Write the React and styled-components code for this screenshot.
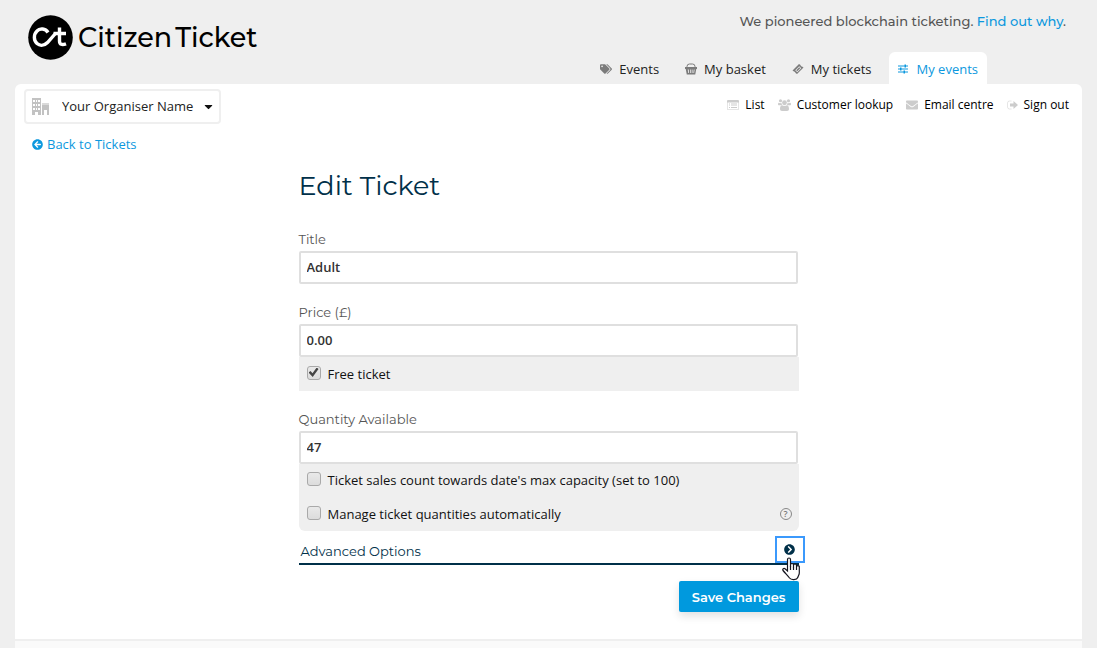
import React, { useState } from 'react';
import styled, { createGlobalStyle, css } from 'styled-components';
import {
  FaTags,
  FaEnvelope,
  FaArrowCircleLeft,
  FaChevronCircleRight,
  FaCaretDown
} from 'react-icons/fa';

/* Icons that the icon set does not have in this shape */
const BasketIcon = () => (
  <svg viewBox="0 0 24 24" width="12" height="12" fill="currentColor" aria-hidden="true">
    <path d="M4 9V7a5 5 0 0 1 5-5h6a5 5 0 0 1 5 5v2" fill="none" stroke="currentColor" strokeWidth="2" />
    <path
      fillRule="evenodd"
      d="M0 8h24v4h-1.500l-2 11h-17l-2-11H0zM5.500 13l1 7h1.500l-.5-7zM10 13v7h1.500v-7zM13.500 13v7H15v-7zM17.500 13l-.7 7h1.400l1-7z"
    />
  </svg>
);

const TicketIcon = () => (
  <svg viewBox="0 0 24 24" width="12" height="12" fill="currentColor" aria-hidden="true">
    <path
      fillRule="evenodd"
      d="M1 15 14 2l3 2a3 3 0 0 0 3 3l3 2-13 13-3-2a3 3 0 0 0-3-3zM6.500 14.500l4 4 8-8-4-4zM8.500 14.500l6-6 2 2-6 6z"
    />
  </svg>
);

const SlidersIcon = () => (
  <svg viewBox="0 0 20 20" width="10" height="10" aria-hidden="true">
    <path d="M0 4h20M0 10h20M0 16h20" stroke="currentColor" strokeWidth="2" />
    <path d="M13 1h3v6h-3zM4 7h3v6H4zM11 13h3v6h-3z" fill="currentColor" />
  </svg>
);

const ListIcon = () => (
  <svg viewBox="0 0 24 20" width="12" height="10" fill="currentColor" aria-hidden="true">
    <path
      fillRule="evenodd"
      d="M2 0h20a2 2 0 0 1 2 2v16a2 2 0 0 1-2 2H2a2 2 0 0 1-2-2V2a2 2 0 0 1 2-2zM1 5v14h22V5zM4 7h2v2H4zM8 7h12v2H8zM4 11h2v1H4zM8 11h12v1H8zM4 14h2v2H4zM8 14h12v2H8z"
    />
  </svg>
);

const UsersIcon = () => (
  <svg viewBox="0 0 26 24" width="13" height="12" fill="currentColor" aria-hidden="true">
    <circle cx="5" cy="3.500" r="3.200" />
    <circle cx="21" cy="3.500" r="3.200" />
    <circle cx="13" cy="7.500" r="4.800" />
    <path d="M1.500 7.500c2 1 4 1 5.500 0 0 2 .3 3.500 1.500 5H2c-1.500 0-2-1-2-2 0-1.500.5-3 1.500-3zM24.500 7.500c-2 1-4 1-5.500 0 0 2-.3 3.500-1.500 5H24c1.500 0 2-1 2-2 0-1.500-.5-3-1.500-3z" />
    <path d="M8 12.500c3 2 7 2 10 0 3 .5 4 4 4 7.500 0 2.500-1.500 4-4 4H8c-2.500 0-4-1.500-4-4 0-3.500 1-7 4-7.500z" />
  </svg>
);

const SignOutIcon = () => (
  <svg viewBox="0 0 22 20" width="11" height="10" fill="currentColor" aria-hidden="true">
    <path d="M9 2H5a4 4 0 0 0-4 4v8a4 4 0 0 0 4 4h4" fill="none" stroke="currentColor" strokeWidth="1" />
    <path d="M6 7h7V2l9 8-9 8v-5H6z" />
  </svg>
);

const BuildingIcon = () => (
  <svg viewBox="0 0 17 17" width="17" height="17" fill="currentColor" aria-hidden="true">
    <path
      fillRule="evenodd"
      d="M0 0h9v17H6v-3H3v3H0zM1 2v2h2V2zM4 2v2h1V2zM6 2v2h2V2zM1 6v2h2V6zM4 6v2h1V6zM6 6v2h2V6zM1 10v2h2v-2zM4 10v2h1v-2zM6 10v2h2v-2z"
    />
    <path opacity="0.6" d="M10 5h7v2h-7z" />
    <path d="M10 7h7v10h-2v-5h-3v5h-2z" />
  </svg>
);

const HandCursor = () => (
  <svg viewBox="0 0 18 24" width="18" height="24" aria-hidden="true">
    <path
      d="M5.500 14V2.500a1.500 1.500 0 0 1 3 0V10 8a1.500 1.500 0 0 1 3 0v2.500V8.500a1.500 1.500 0 0 1 3 0V11v-1.500a1.500 1.500 0 0 1 2.800 0V16c0 2-1.300 3-1.500 4.500-1 2.500-6.500 2.800-8.300.5C6 19 4 17 1 13.500c-.8-1.400.8-2.800 2-1.800z"
      fill="#fff"
      stroke="#15151f"
      strokeWidth="1.200"
    />
    <path d="M8.500 9v4M11.500 10v3M14.500 11v2" stroke="#15151f" strokeWidth="1.200" />
  </svg>
);

const LogoMark = () => (
  <svg viewBox="0 0 45 45" width="45" height="45" aria-hidden="true">
    <circle cx="22.500" cy="22.500" r="22.300" fill="#000" />
    <g fill="none" stroke="#fff" strokeWidth="3.400">
      <path d="M20 17.500C17.500 13.500 12 12.800 9 16c-3.600 3.500-3.400 9.500 0 12.500 3.200 2.800 7.500 2 10.500-1l7.500-8.500" />
      <path d="M31.500 12.500V26c0 3.500 2.500 4.300 6.500 2.800M25.500 18.500H38" />
    </g>
  </svg>
);

const navItems = [
  { label: 'Events', icon: <FaTags size={12} /> },
  { label: 'My basket', icon: <BasketIcon /> },
  { label: 'My tickets', icon: <TicketIcon /> },
  { label: 'My events', icon: <SlidersIcon />, active: true }
];

const subItems = [
  { label: 'List', icon: <ListIcon /> },
  { label: 'Customer lookup', icon: <UsersIcon /> },
  { label: 'Email centre', icon: <FaEnvelope size={12} /> },
  { label: 'Sign out', icon: <SignOutIcon /> }
];

const Header = () => (
  <TopBar>
    <Logo href="/">
      <LogoMark />
      <Wordmark>
        <span>Citizen</span> <span>Ticket</span>
      </Wordmark>
    </Logo>
    <TopRight>
      <Tagline>
        We pioneered blockchain ticketing. <a href="/blockchain">Find out why</a>.
      </Tagline>
      <Tabs>
        {navItems.map((item) => (
          <Tab href="#" key={item.label} $active={item.active}>
            <IconBox>{item.icon}</IconBox>
            {item.label}
          </Tab>
        ))}
      </Tabs>
    </TopRight>
  </TopBar>
);

const Toolbar = () => (
  <ToolbarRow>
    <Organiser>
      <BuildingIcon />
      <select aria-label="Organiser">
        <option>Your Organiser Name</option>
      </select>
      <FaCaretDown size={13} />
    </Organiser>
    <SubNav>
      {subItems.map((item) => (
        <SubLink href="#" key={item.label}>
          {item.icon}
          {item.label}
        </SubLink>
      ))}
    </SubNav>
  </ToolbarRow>
);

const TicketForm = () => {
  const [title, setTitle] = useState('Adult');
  const [price, setPrice] = useState('0.00');
  const [quantity, setQuantity] = useState('47');

  return (
    <Form onSubmit={(e) => e.preventDefault()}>
      <Heading>Edit Ticket</Heading>
      <Field>
        <Label htmlFor="title">Title</Label>
        <TextInput id="title" value={title} onChange={(e) => setTitle(e.target.value)} />
      </Field>
      <Field>
        <Label htmlFor="price">Price (£)</Label>
        <TextInput id="price" value={price} onChange={(e) => setPrice(e.target.value)} />
        <Options>
          <Option>
            <Checkbox type="checkbox" defaultChecked />
            Free ticket
          </Option>
        </Options>
      </Field>
      <Field>
        <Label htmlFor="quantity">Quantity Available</Label>
        <TextInput id="quantity" value={quantity} onChange={(e) => setQuantity(e.target.value)} />
        <Options $rounded>
          <Option>
            <Checkbox type="checkbox" />
            Ticket sales count towards date's max capacity (set to 100)
          </Option>
          <OptionRow>
            <Option>
              <Checkbox type="checkbox" />
              Manage ticket quantities automatically
            </Option>
            <Help type="button" aria-label="Help">?</Help>
          </OptionRow>
        </Options>
      </Field>
      <Advanced>
        Advanced Options
        <Toggle type="button" aria-label="Show advanced options">
          <FaChevronCircleRight size={11} />
          <Pointer>
            <HandCursor />
          </Pointer>
        </Toggle>
      </Advanced>
      <Save type="submit">Save Changes</Save>
    </Form>
  );
};

export default function App() {
  return (
    <>
      <GlobalStyle />
      <Header />
      <Panel>
        <Toolbar />
        <BackLink href="#">
          <FaArrowCircleLeft size={11} />
          Back to Tickets
        </BackLink>
        <TicketForm />
      </Panel>
      <Footer />
    </>
  );
}

const display = "Montserrat, Inter, 'Liberation Sans', sans-serif";
const body = "'Open Sans', 'Noto Sans', sans-serif";

const GlobalStyle = createGlobalStyle`
  * {
    box-sizing: border-box;
  }

  body {
    margin: 0;
    background: #efefef;
    color: #111;
    font: 13px/20px ${body};
  }

  #root {
    display: flex;
    flex-direction: column;
    min-height: 100vh;
  }

  a {
    color: #0c98de;
    text-decoration: none;
  }

  svg {
    display: block;
    flex: none;
  }
`;

const TopBar = styled.header`
  display: flex;
  justify-content: space-between;
  height: 84px;
  padding: 0 31px 0 28px;
`;

const Logo = styled.a`
  display: flex;
  align-items: center;
  align-self: flex-start;
  gap: 5px;
  margin-top: 15px;
  color: #000;
  font: 500 27px/45px ${display};
  white-space: nowrap;
`;

const Wordmark = styled.span`
  display: flex;
  gap: 3px;
`;

const TopRight = styled.div`
  display: flex;
  flex-direction: column;
  justify-content: space-between;
  align-items: flex-end;
  padding-top: 11px;
`;

const Tagline = styled.p`
  margin: 0;
  color: #555;
  font: 500 13px/20px ${display};
`;

const Tabs = styled.nav`
  display: flex;
  gap: 8px;
  margin-right: 79px;
`;

const Tab = styled.a`
  display: flex;
  align-items: center;
  height: 32px;
  padding: 2px 9px 0;
  border-radius: 6px 6px 0 0;
  color: #222;

  ${(props) => props.$active && css`
    background: #fff;
    color: #0c98de;
  `}

  & svg {
    color: ${(props) => (props.$active ? '#0c98de' : '#7b7b7b')};
  }
`;

const IconBox = styled.span`
  width: 19px;
`;

const Panel = styled.main`
  margin: 0 15px;
  padding: 5px 9px 27px;
  border-radius: 6px 6px 0 0;
  background: #fff;
`;

const ToolbarRow = styled.div`
  display: flex;
  justify-content: space-between;
  padding-right: 4px;
`;

const Organiser = styled.label`
  display: flex;
  align-items: center;
  height: 35px;
  padding: 0 4px 0 6px;
  border: 2px solid #efefef;
  border-radius: 4px;

  & svg:first-child {
    margin-right: 13px;
    color: #c2c2c2;
  }

  & select {
    appearance: none;
    padding: 0 8px 1px 0;
    border: 0;
    background: none;
    color: #222;
    font: 13px/20px ${body};
  }
`;

const SubNav = styled.nav`
  display: flex;
  align-items: center;
  gap: 13px;
  height: 32px;
`;

const SubLink = styled.a`
  display: flex;
  align-items: center;
  gap: 6px;
  color: #000;
  font-size: 12px;

  & svg {
    color: #ccc;
  }
`;

const BackLink = styled.a`
  display: inline-flex;
  align-items: center;
  gap: 4px;
  margin: 10px 0 0 8px;
`;

const Form = styled.form`
  display: flex;
  flex-direction: column;
  max-width: 500px;
  margin: 15px auto 0;
`;

const Heading = styled.h1`
  margin: 0 0 27px;
  color: #003049;
  font: 400 27px/32px ${display};
`;

const Field = styled.div`
  display: flex;
  flex-direction: column;
  margin-bottom: 18px;

  &:nth-of-type(3) {
    margin-bottom: 0;
  }
`;

const Label = styled.label`
  margin-bottom: 2px;
  color: #555;
  font: 13px/20px ${display};
`;

const TextInput = styled.input`
  height: 33px;
  margin-right: 1px;
  padding: 0 6px 1px;
  border: 2px solid #dfdfdf;
  border-radius: 2px;
  background: #fff;
  color: #333;
  font: 600 13px/20px ${body};
  outline: 0;
`;

const Option = styled.label`
  display: flex;
  align-items: center;
  gap: 7px;
  height: 34px;
  padding-left: 8px;
`;

const Options = styled.div`
  padding-right: 7px;
  background: #efefef;

  ${(props) => props.$rounded && css`
    border-radius: 0 0 6px 6px;

    & > ${Option} {
      height: 33px;
    }
  `}
`;

const OptionRow = styled.div`
  display: flex;
  align-items: center;
  justify-content: space-between;
`;

const Checkbox = styled.input`
  appearance: none;
  display: grid;
  place-items: center;
  width: 14px;
  height: 14px;
  margin: 0 0 2px;
  border: 1px solid #a9a9a9;
  border-radius: 3px;
  background: linear-gradient(#e9e9e9, #dcdcdc);

  &:checked::before {
    content: '';
    width: 10px;
    height: 10px;
    background: #444;
    clip-path: polygon(0 50%, 20% 35%, 40% 58%, 82% 0, 100% 15%, 42% 95%);
  }
`;

const Help = styled.button`
  width: 12px;
  height: 12px;
  padding: 0;
  border: 1px solid #888;
  border-radius: 50%;
  background: none;
  color: #777;
  font: 600 9px/10px ${body};
`;

const Advanced = styled.div`
  display: flex;
  align-items: center;
  justify-content: space-between;
  height: 34px;
  padding: 8px 0 0 2px;
  border-bottom: 2px solid #003049;
  color: #003049;
  font: 13px/20px ${display};
`;

const Toggle = styled.button`
  position: relative;
  display: grid;
  place-items: center;
  width: 26px;
  height: 23px;
  margin: 0 -4px 3px 0;
  padding: 1px 0 0;
  border: 0;
  outline: 2px solid #3b99fc;
  background: #fff;
  color: #003049;
`;

const Pointer = styled.span`
  position: absolute;
  top: 19px;
  left: 5px;
  z-index: 1;
`;

const Save = styled.button`
  align-self: flex-end;
  margin-top: 16px;
  padding: 6px 13px 5px;
  border: 0;
  border-radius: 2px;
  background: #0099de;
  box-shadow: 0 4px 8px rgba(0, 0, 0, 0.12);
  color: #fff;
  font: 600 13px/20px ${display};
`;

const Footer = styled.footer`
  flex: 1;
  margin: 0 15px;
  border-top: 2px solid #efefef;
  background: #fafafa;
`;
